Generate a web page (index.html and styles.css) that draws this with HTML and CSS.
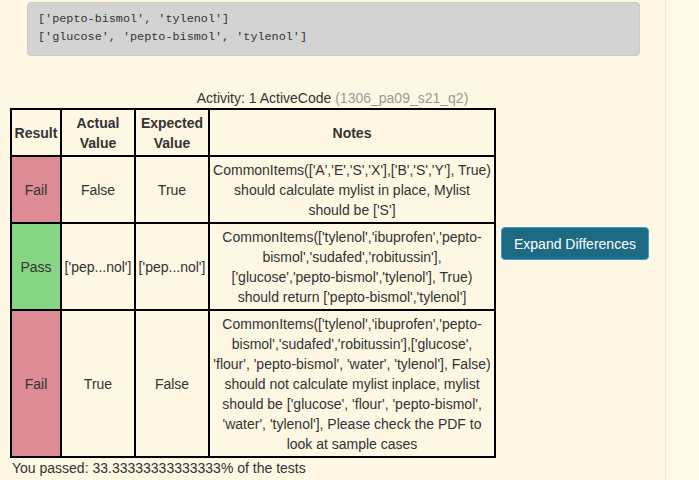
FILE: index.html
```html
<!DOCTYPE html>
<html>
<head>
<meta charset="utf-8">
<link rel="stylesheet" href="styles.css">
</head>
<body>
<div class="page">
  <pre class="output">['pepto-bismol', 'tylenol']
['glucose', 'pepto-bismol', 'tylenol']</pre>
  <div class="caption">Activity: 1 ActiveCode <span class="muted">(1306_pa09_s21_q2)</span></div>
  <div class="results">
    <table class="tests">
      <colgroup>
        <col class="c-result">
        <col class="c-val">
        <col class="c-val">
        <col class="c-notes">
      </colgroup>
      <thead>
        <tr><th>Result</th><th>Actual Value</th><th>Expected Value</th><th>Notes</th></tr>
      </thead>
      <tbody>
        <tr>
          <td class="fail">Fail</td><td>False</td><td>True</td>
          <td>CommonItems(['A','E','S','X'],['B','S','Y'], True) should calculate mylist in place, Mylist should be ['S']</td>
        </tr>
        <tr>
          <td class="pass">Pass</td><td>['pep...nol']</td><td>['pep...nol']</td>
          <td>CommonItems(['tylenol','ibuprofen','pepto-bismol','sudafed','robitussin'], ['glucose','pepto-bismol','tylenol'], True) should return ['pepto-bismol','tylenol']</td>
        </tr>
        <tr>
          <td class="fail">Fail</td><td>True</td><td>False</td>
          <td>CommonItems(['tylenol','ibuprofen','pepto-bismol','sudafed','robitussin'],['glucose', 'flour', 'pepto-bismol', 'water', 'tylenol'], False) should not calculate mylist inplace, mylist should be ['glucose', 'flour', 'pepto-bismol', 'water', 'tylenol'], Please check the PDF to look at sample cases</td>
        </tr>
      </tbody>
    </table>
    <button class="btn-expand" type="button">Expand Differences</button>
  </div>
  <div class="summary">You passed: 33.33333333333333% of the tests</div>
</div>
</body>
</html>
```

FILE: styles.css
```css
html, body {
  margin: 0;
  padding: 0;
}
body {
  background: #fef9e8;
  font-family: "Liberation Sans", Arial, sans-serif;
  font-size: 14px;
  line-height: 20px;
  color: #333;
}
.page {
  width: 666px;
  min-height: 480px;
  box-sizing: border-box;
  border-right: 1px solid #f8e6c9;
  background: #fdf7e3;
  padding: 2px 0 0 10px;
}
.output {
  margin: 0 25px 0 17px;
  padding: 7px 10px 9px;
  background: #d3d3d3;
  border: 1px solid #cacaca;
  border-radius: 4px;
  font-family: "Liberation Mono", "DejaVu Sans Mono", monospace;
  font-size: 11.8px;
  line-height: 18px;
  color: #333;
  white-space: pre;
}
.caption {
  margin: 32px 0 0 -10px;
  text-align: center;
  line-height: 20px;
}
.muted {
  color: #999;
}
.results {
  display: flex;
  align-items: flex-start;
  gap: 5px;
}
.tests {
  border-collapse: collapse;
  table-layout: fixed;
  width: 486px;
}
.c-result { width: 50px; }
.c-val { width: 74px; }
.c-notes { width: 286px; }
.tests th,
.tests td {
  border: 2px solid #000;
  padding: 2.5px 2px;
  text-align: center;
  vertical-align: middle;
  line-height: 20px;
}
.tests th {
  font-weight: bold;
}
.tests td.fail {
  background: #dd8b94;
}
.tests td.pass {
  background: #85d584;
}
.btn-expand {
  margin-top: 119px;
  padding: 5.5px 12px;
  background: #1c6a84;
  border: 1px solid #3d9fc2;
  border-radius: 4px;
  color: #fff;
  font-family: "Liberation Sans", Arial, sans-serif;
  font-size: 14px;
  line-height: 20px;
}
.summary {
  margin-left: 2px;
  line-height: 20px;
}
```
